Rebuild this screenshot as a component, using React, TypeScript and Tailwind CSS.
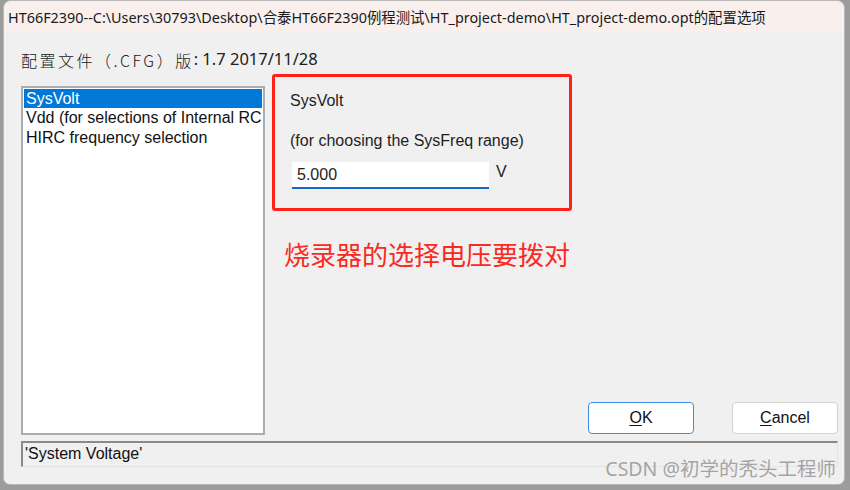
import React from 'react';

const ui = { fontFamily: '"Liberation Sans", Arial, sans-serif' };
const cjk = { fontFamily: '"Noto Sans", "Noto Sans CJK SC", sans-serif' };

export default function App() {
  const items = ['SysVolt', 'Vdd (for selections of Internal RC', 'HIRC frequency selection'];
  return (
    <div className="w-[850px] h-[490px] bg-[#9c9c9c] pl-[3px] pr-[5px] pb-[5px] overflow-hidden">
      {/* Dialog window */}
      <div className="relative h-full flex flex-col bg-[#f0f0f0] border border-[#b8b8b8] rounded-t-[8px] rounded-b-[7px] overflow-hidden">
        {/* Title bar */}
        <div className="h-[32px] shrink-0 bg-[#f9f0ee] flex items-center pl-[4px] pt-[1px] text-[14.4px] text-[#1a1a1a] whitespace-nowrap" style={cjk}>
          HT66F2390--C:\Users\30793\Desktop\合泰HT66F2390例程测试\HT_project-demo\HT_project-demo.opt的配置选项
        </div>

        {/* Body */}
        <div className="flex-1 flex flex-col pl-[17px] pr-[6px]">
          <div className="h-[41px] flex items-end pb-[2px] whitespace-nowrap text-[#202020]">
            <span className="text-[16px] tracking-[2.5px]" style={{ fontFamily: '"Noto Sans CJK SC", sans-serif', fontWeight: 300 }}>
              配置文件（.CFG）版
            </span>
            <span className="text-[16.5px]" style={cjk}>: 1.7 2017/11/28</span>
          </div>

          <div className="flex">
            {/* List box */}
            <div className="mt-[12px] w-[244px] h-[349px] bg-white border-2 border-[#a9adb3] px-[1px] py-[1px] text-[16px] leading-[20px] text-[#111]" style={ui}>
              {items.map((t, i) => (
                <div
                  key={t}
                  className={
                    i === 0
                      ? 'bg-[#0078d7] text-white pl-[2px] h-[19px] leading-[19px] whitespace-nowrap overflow-hidden'
                      : 'pl-[2px] h-[20px] whitespace-nowrap overflow-hidden'
                  }
                >
                  {t}
                </div>
              ))}
            </div>

            {/* Right side */}
            <div className="ml-[7px] flex-1 flex flex-col">
              <div className="w-[300px] h-[137px] border-[3px] border-[#fe2218] rounded-[3px] pl-[15px] pt-[14px] text-[16px] text-[#1e1e1e]" style={ui}>
                <div className="leading-[20px]">SysVolt</div>
                <div className="mt-[20px] leading-[20px]">(for choosing the SysFreq range)</div>
                <div className="mt-[11px] ml-[2px] flex items-start">
                  <div className="w-[197px] h-[27px] bg-white border-b-2 border-[#1668c8] pl-[5px] leading-[26px]">5.000</div>
                  <span className="ml-[7px] mt-[-2px] leading-[24px]">V</span>
                </div>
              </div>

              <div className="mt-[28px] pl-[12px] text-[26px] leading-[30px] text-[#f92a22]" style={{ fontFamily: '"Noto Sans CJK SC", sans-serif' }}>
                烧录器的选择电压要拨对
              </div>

              <div className="flex-1" />

              <div className="flex justify-end gap-[38px] mb-[1px]" style={ui}>
                <button className="w-[106px] h-[32px] bg-white border border-[#3b8fe2] rounded-[4px] text-[16px] text-[#111]">
                  <span className="underline underline-offset-2">O</span>K
                </button>
                <button className="w-[106px] h-[32px] bg-white border border-[#d2d2d2] rounded-[4px] text-[16px] text-[#111]">
                  <span className="underline underline-offset-2">C</span>ancel
                </button>
              </div>
            </div>
          </div>

          {/* Status bar */}
          <div className="mt-[6px] h-[26px] border-t-2 border-l-2 border-[#8a8a8a] border-b border-r border-b-[#e4e4e4] border-r-[#e4e4e4] pl-[2px] text-[16px] leading-[22px] text-[#111]" style={ui}>
            'System Voltage'
          </div>
        </div>

        {/* CSDN watermark */}
        <div className="absolute right-[8px] bottom-[1px] text-[19.5px] text-[#9a9a9a]/90 whitespace-nowrap" style={cjk}>
          CSDN @初学的秃头工程师
        </div>
      </div>
    </div>
  );
}
